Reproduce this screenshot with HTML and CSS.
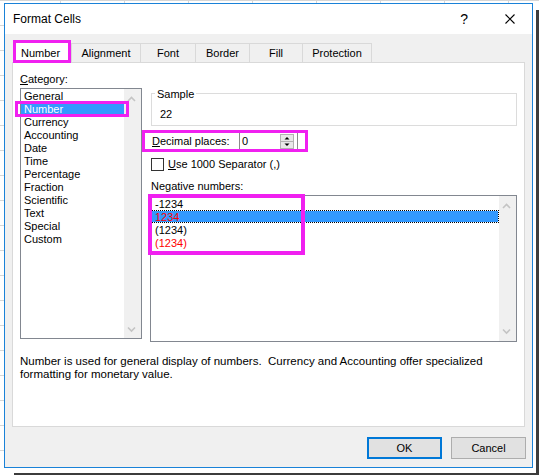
FILE: index.html
```html
<!DOCTYPE html>
<html>
<head>
<meta charset="utf-8">
<title>Format Cells</title>
<link rel="stylesheet" href="styles.css">
</head>
<body>
<div class="dialog">
  <div class="titlebar">
    <span class="title">Format Cells</span>
    <span class="help">?</span>
    <svg class="close" width="10" height="10" viewBox="0 0 10 10"><path d="M0.5 0.5 L9.5 9.5 M9.5 0.5 L0.5 9.5" stroke="#000" stroke-width="1.1" fill="none"/></svg>
  </div>
  <div class="client">
    <div class="tabs">
      <div class="tab tab-active">Number</div>
      <div class="tab tab-align">Alignment</div>
      <div class="tab tab-font">Font</div>
      <div class="tab tab-border">Border</div>
      <div class="tab tab-fill">Fill</div>
      <div class="tab tab-protect">Protection</div>
    </div>
    <div class="panel">
      <div class="columns">
        <div class="left">
          <div class="label cat-label"><u>C</u>ategory:</div>
          <div class="listbox cat-list">
            <div class="items">
              <div class="item">General</div>
              <div class="item selected mark-cat">Number</div>
              <div class="item">Currency</div>
              <div class="item">Accounting</div>
              <div class="item">Date</div>
              <div class="item">Time</div>
              <div class="item">Percentage</div>
              <div class="item">Fraction</div>
              <div class="item">Scientific</div>
              <div class="item">Text</div>
              <div class="item">Special</div>
              <div class="item">Custom</div>
            </div>
            <div class="vscroll">
              <svg width="17" height="17" viewBox="0 0 17 17"><path d="M4 12 L7.5 8.5 L11 12" stroke="#c4c4c4" stroke-width="1.6" fill="none"/></svg>
              <svg width="17" height="17" viewBox="0 0 17 17"><path d="M4 6.5 L7.5 10 L11 6.5" stroke="#c4c4c4" stroke-width="1.6" fill="none"/></svg>
            </div>
          </div>
        </div>
        <div class="right">
          <fieldset class="sample">
            <legend>Sample</legend>
            <div class="sample-value">22</div>
          </fieldset>
          <div class="decimal-row mark-decimal">
            <div class="decimal-label"><u>D</u>ecimal places:</div>
            <div class="spin-input">
              <span>0</span>
              <svg class="spinner" width="14" height="15" viewBox="0 0 14 15">
                <rect x="0.5" y="0.5" width="13" height="14" fill="#e8e8e8" stroke="#b2b2b2"/>
                <line x1="0.5" y1="7.5" x2="13.5" y2="7.5" stroke="#b2b2b2"/>
                <path d="M4.5 5.5 L7 3 L9.5 5.5 Z" fill="#000"/>
                <path d="M4.5 9.5 L7 12 L9.5 9.5 Z" fill="#000"/>
              </svg>
            </div>
          </div>
          <div class="check-row">
            <div class="checkbox"></div>
            <div class="check-label"><u>U</u>se 1000 Separator (,)</div>
          </div>
          <div class="label neg-label">Negative numbers:</div>
          <div class="listbox neg-list mark-neg">
            <div class="items">
              <div class="item">-1234</div>
              <div class="item selected red">1234</div>
              <div class="item">(1234)</div>
              <div class="item red">(1234)</div>
            </div>
            <div class="vscroll">
              <svg width="17" height="17" viewBox="0 0 17 17"><path d="M4 12 L7.5 8.5 L11 12" stroke="#c4c4c4" stroke-width="1.6" fill="none"/></svg>
              <svg width="17" height="17" viewBox="0 0 17 17"><path d="M4 5.5 L7.5 9 L11 5.5" stroke="#c4c4c4" stroke-width="1.6" fill="none"/></svg>
            </div>
          </div>
        </div>
      </div>
      <p class="description">Number is used for general display of numbers.&nbsp; Currency and Accounting offer specialized<br>formatting for monetary value.</p>
    </div>
    <div class="footer">
      <button class="btn btn-default">OK</button>
      <button class="btn">Cancel</button>
    </div>
  </div>
</div>
</body>
</html>
```

FILE: styles.css
```css
*,
*::before,
*::after {
  box-sizing: border-box;
}

html,
body {
  margin: 0;
  padding: 0;
}

body {
  width: 539px;
  height: 475px;
  overflow: hidden;
  padding: 3px 0 0 4px;
  font-family: "Liberation Sans", Arial, sans-serif;
  font-size: 11px;
  color: #000;
  background-color: #fff;
  background-image:
    linear-gradient(to right, #d6d6d6 1px, transparent 1px),
    linear-gradient(to bottom, #d6d6d6 1px, transparent 1px);
  background-size: 64px 100%, 100% 25px;
  background-position: 60px 0, 0 0;
}

.dialog {
  width: 529px;
  height: 465px;
  border: 1px solid #1a82d8;
  background: #f0f0f0;
  box-shadow: 3px 5px 0 #fff, 10px 7px 0 #3c3c3c;
  display: flex;
  flex-direction: column;
}

/* title bar */
.titlebar {
  flex: none;
  height: 30px;
  background: #fff;
  display: flex;
  align-items: center;
}

.title {
  flex: 1;
  padding-left: 8px;
  font-size: 12px;
}

.help {
  font-size: 14px;
  margin-right: 37px;
}

.close {
  margin-right: 17px;
}

/* client area */
.client {
  flex: 1;
  padding-top: 6px;
}

.tabs {
  display: flex;
  align-items: flex-end;
  height: 22px;
  padding-left: 8px;
}

.tab {
  height: 19px;
  border: 1px solid #d9d9d9;
  border-bottom: 0;
  margin-left: -1px;
  text-align: center;
  line-height: 19px;
  background: #f0f0f0;
  white-space: nowrap;
}

.tab-active {
  position: relative;
  z-index: 1;
  width: 58px;
  height: 23px;
  margin: 0 0 -1px 0;
  border: 3px solid #f020f0;
  background: #fff;
  line-height: 20px;
  text-align: left;
  padding-left: 5px;
}

.tab-align {
  width: 70px;
  margin-left: 0;
}

.tab-font {
  width: 56px;
}

.tab-border {
  width: 55px;
}

.tab-fill {
  width: 54px;
}

.tab-protect {
  width: 70px;
}

.panel {
  margin-left: 7px;
  width: 513px;
  height: 365px;
  border: 1px solid #d9d9d9;
  background: #fff;
  padding: 9px 0 0 7px;
}

.columns {
  display: grid;
  grid-template-columns: 122px 368px;
  column-gap: 8px;
  align-items: start;
}

.label {
  height: 13px;
  line-height: 15px;
  white-space: nowrap;
}

.cat-label {
  margin-bottom: 3px;
}

/* list boxes */
.listbox {
  position: relative;
  display: flex;
  border: 1px solid #828790;
  background: #fff;
}

.cat-list {
  height: 251px;
}

.items {
  flex: 1;
}

.item {
  position: relative;
  height: 13px;
  line-height: 15px;
  padding-left: 3px;
  white-space: nowrap;
}

.cat-list .item.selected {
  background: #3399ff;
  color: #fff;
}

.vscroll {
  width: 17px;
  background: #f0f0f0;
  display: flex;
  flex-direction: column;
  justify-content: space-between;
}

.vscroll svg {
  display: block;
}

/* right column */
.sample {
  margin: 13px 1px 0;
  padding: 0 3px 5px;
  min-width: 0;
  border: 1px solid #dcdcdc;
}

.sample legend {
  padding: 3px 2px 0;
  line-height: 13px;
}

.sample-value {
  margin: 6px 0 0 5px;
  height: 13px;
  line-height: 15px;
}

.decimal-row {
  position: relative;
  display: flex;
  align-items: center;
  height: 21px;
  margin-top: 5px;
}

.decimal-label {
  width: 89px;
  padding-left: 2px;
  line-height: 15px;
  white-space: nowrap;
}

.spin-input {
  width: 59px;
  height: 21px;
  border: 1px solid #8a8a8a;
  background: #fff;
  display: flex;
  align-items: center;
  justify-content: space-between;
  padding: 0 3px 0 2px;
  line-height: 15px;
}

.spinner {
  display: block;
}

.check-row {
  display: flex;
  align-items: center;
  height: 13px;
  margin-top: 6px;
}

.checkbox {
  width: 13px;
  height: 13px;
  margin-left: 1px;
  border: 1px solid #333;
  background: #fff;
}

.check-label {
  margin-left: 4px;
  line-height: 15px;
  white-space: nowrap;
}

.neg-label {
  margin-top: 8px;
  margin-bottom: 3px;
  padding-left: 1px;
}

.neg-list {
  width: 367px;
  height: 147px;
}

.neg-list .items {
  padding-top: 1px;
}

.neg-list .item {
  padding-left: 4px;
}

.neg-list .item.selected {
  background: #3399ff;
  box-shadow: inset 0 0 0 1px #fff;
  outline: 1px dotted #000;
  outline-offset: -1px;
}

.red {
  color: #ff0000;
}

/* annotation boxes */
.mark-cat::after,
.mark-decimal::after,
.mark-neg::after {
  content: "";
  position: absolute;
  border: 3px solid #f020f0;
  pointer-events: none;
}

.mark-cat::after {
  left: -6px;
  right: -5px;
  top: -1px;
  bottom: -2px;
}

.mark-decimal::after {
  left: -8px;
  top: -1px;
  width: 166px;
  height: 22px;
}

.mark-neg::after {
  left: -3px;
  top: -2px;
  width: 157px;
  height: 61px;
  border-width: 4px;
}

.description {
  margin: 13px 0 0;
  line-height: 13px;
  font-size: 11.5px;
  white-space: nowrap;
}

/* buttons */
.footer {
  display: flex;
  justify-content: flex-end;
  gap: 9px;
  padding: 10px 6px 0 0;
}

.btn {
  width: 75px;
  height: 22px;
  padding: 0;
  font-family: inherit;
  font-size: 11px;
  color: #000;
  background: #e1e1e1;
  border: 1px solid #adadad;
}

.btn-default {
  border: 2px solid #0078d7;
}
```
